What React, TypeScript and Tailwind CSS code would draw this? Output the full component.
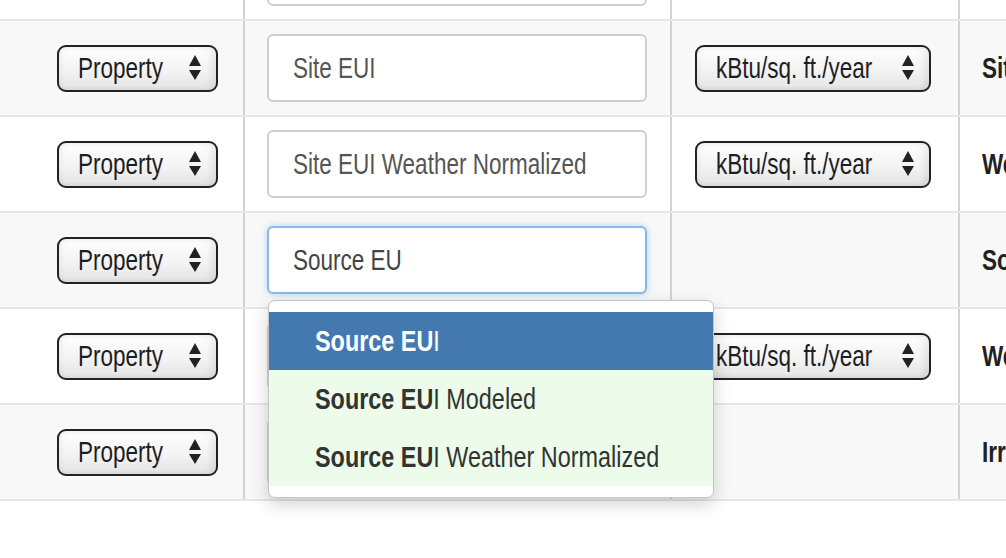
import React from "react";

type Row = {
  striped: boolean;
  value: string;
  unit: string | null;
  label: string;
  focused?: boolean;
};

const rows: Row[] = [
  { striped: false, value: "Site Area", unit: null, label: "Gross Floor Area" },
  { striped: true, value: "Site EUI", unit: "kBtu/sq. ft./year", label: "Site EUI" },
  { striped: false, value: "Site EUI Weather Normalized", unit: "kBtu/sq. ft./year", label: "Weather Normalized Site EUI" },
  { striped: true, value: "Source EU", unit: null, label: "Source EUI", focused: true },
  { striped: false, value: "Source EUI Weather Normalized", unit: "kBtu/sq. ft./year", label: "Weather Normalized Source EUI" },
  { striped: true, value: "Irrigation Area", unit: null, label: "Irrigated Area" },
];

const suggestions = ["", " Modeled", " Weather Normalized"];

// condensed look: the page font is a narrow sans, squeeze Liberation Sans to match
function Narrow({ children, wide }: { children: React.ReactNode; wide?: boolean }) {
  return (
    <span className={`inline-block origin-left whitespace-nowrap ${wide ? "scale-x-[0.78]" : "scale-x-[0.75]"}`}>
      {children}
    </span>
  );
}

function Arrows() {
  return (
    <svg width="12" height="26" viewBox="0 0 12 26" className="shrink-0">
      <path d="M6 0 L12 11 L0 11 Z" fill="#222" />
      <path d="M0 15 L12 15 L6 25 Z" fill="#222" />
    </svg>
  );
}

function FakeSelect({ text, width }: { text: string; width: string }) {
  return (
    <div
      className={`${width} h-[47px] flex items-center pl-[19px] pr-[15px] border-2 border-[#222] rounded-[9px] bg-[linear-gradient(to_bottom,#fefefe,#f3f3f3_55%,#e4e4e4)] shadow-[inset_-5px_0_6px_rgba(0,0,0,0.07),inset_3px_0_4px_rgba(0,0,0,0.04)] text-[#1e1e1e]`}
    >
      <div className="flex-1 min-w-0">
        <Narrow>{text}</Narrow>
      </div>
      <Arrows />
    </div>
  );
}

export default function App() {
  return (
    <div className="w-[1006px] h-[558px] overflow-hidden bg-white font-['Liberation_Sans',Arial,sans-serif] text-[30px] leading-none">
      <div className="-mt-[75px]">
        {rows.map((row, i) => (
          <div
            key={i}
            className={`flex h-[96px] border-b-2 border-[#e6e6e6] ${row.striped ? "bg-[#f8f8f8]" : "bg-white"}`}
          >
            <div className="w-[245px] shrink-0 border-r-2 border-[#d2d2d2] flex items-center justify-end pr-[25px]">
              <FakeSelect text="Property" width="w-[161px]" />
            </div>
            <div className="w-[427px] shrink-0 border-r-2 border-[#d2d2d2] flex items-center pl-[22px]">
              <div className="relative">
                <div
                  className={`w-[380px] h-[68px] flex items-center pl-[24px] rounded-[6px] bg-white border-2 overflow-hidden ${
                    row.focused
                      ? "border-[#8ab8ea] shadow-[0_0_6px_rgba(102,175,233,0.5)] text-[#444]"
                      : "border-[#cfcfcf] text-[#555]"
                  }`}
                >
                  <Narrow>{row.value}</Narrow>
                </div>
                {row.focused && (
                  <div className="absolute top-full left-[1px] mt-[6px] w-[446px] z-10 bg-white border border-[#c4c4c4] rounded-[7px] py-[11px] shadow-[0_6px_18px_rgba(0,0,0,0.18)] overflow-hidden">
                    {suggestions.map((rest, j) => (
                      <div
                        key={j}
                        className={`h-[58px] flex items-center pl-[46px] ${
                          j === 0 ? "bg-[#4479b0] text-white" : "bg-[#edfbea] text-[#333]"
                        }`}
                      >
                        <Narrow wide>
                          <span className="font-bold">Source EU</span>
                          <span>I{rest}</span>
                        </Narrow>
                      </div>
                    ))}
                  </div>
                )}
              </div>
            </div>
            <div className="w-[288px] shrink-0 border-r-2 border-[#d2d2d2] flex items-center pl-[23px]">
              {row.unit && <FakeSelect text={row.unit} width="w-[236px]" />}
            </div>
            <div className="flex-1 flex items-center pl-[22px] font-bold text-[#222] overflow-hidden">
              <Narrow>{row.label}</Narrow>
            </div>
          </div>
        ))}
      </div>
    </div>
  );
}
